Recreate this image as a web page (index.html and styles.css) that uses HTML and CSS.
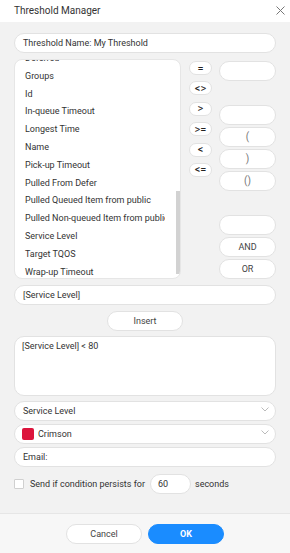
FILE: index.html
```html
<!DOCTYPE html>
<html>
<head>
<meta charset="utf-8">
<link rel="stylesheet" href="styles.css">
</head>
<body>
<div class="dialog">
  <div class="header">
    <span class="title">Threshold Manager</span>
    <svg class="close" width="9" height="9" viewBox="0 0 9 9"><path d="M0.5 0.5L8.5 8.5M8.5 0.5L0.5 8.5" stroke="#777" stroke-width="1" fill="none"/></svg>
  </div>
  <div class="content">
    <div class="pill field">Threshold Name: My Threshold</div>
    <div class="builder">
      <div class="list">
        <div class="list-inner">
          <div class="item">Deferred</div>
          <div class="item">Groups</div>
          <div class="item">Id</div>
          <div class="item">In-queue Timeout</div>
          <div class="item">Longest Time</div>
          <div class="item">Name</div>
          <div class="item">Pick-up Timeout</div>
          <div class="item">Pulled From Defer</div>
          <div class="item">Pulled Queued Item from public</div>
          <div class="item">Pulled Non-queued Item from public</div>
          <div class="item">Service Level</div>
          <div class="item">Target TQOS</div>
          <div class="item">Wrap-up Timeout</div>
        </div>
        <div class="thumb"></div>
      </div>
      <div class="ops">
        <div class="op">=</div>
        <div class="op">&lt;&gt;</div>
        <div class="op">&gt;</div>
        <div class="op">&gt;=</div>
        <div class="op">&lt;</div>
        <div class="op">&lt;=</div>
      </div>
      <div class="tokens">
        <div class="tok"></div>
        <div class="tok spacer"></div>
        <div class="tok"></div>
        <div class="tok paren">(</div>
        <div class="tok paren">)</div>
        <div class="tok paren">()</div>
        <div class="tok spacer"></div>
        <div class="tok"></div>
        <div class="tok">AND</div>
        <div class="tok">OR</div>
      </div>
    </div>
    <div class="pill field sel">[Service Level]</div>
    <div class="insert-row"><div class="pill btn">Insert</div></div>
    <div class="expr">[Service Level] &lt; 80</div>
    <div class="pill field select">
      <span>Service Level</span>
      <svg class="chev" width="8" height="5" viewBox="0 0 8 5"><path d="M0.5 0.5L4 4L7.5 0.5" stroke="#bbb" stroke-width="1" fill="none"/></svg>
    </div>
    <div class="pill field select color">
      <span class="swatch"></span><span>Crimson</span>
      <svg class="chev" width="8" height="5" viewBox="0 0 8 5"><path d="M0.5 0.5L4 4L7.5 0.5" stroke="#bbb" stroke-width="1" fill="none"/></svg>
    </div>
    <div class="pill field email">Email:</div>
    <div class="persist">
      <span class="checkbox"></span>
      <span class="plabel">Send if condition persists for</span>
      <div class="pill secs">60</div>
      <span class="plabel">seconds</span>
    </div>
  </div>
  <div class="footer">
    <div class="pill fbtn">Cancel</div>
    <div class="pill fbtn ok">OK</div>
  </div>
</div>
</body>
</html>
```
FILE: styles.css
```css
* { box-sizing: border-box; }
html, body { margin: 0; padding: 0; }
body {
  font-family: Roboto, "Liberation Sans", sans-serif;
  color: #333;
  background: #fff;
}
.dialog {
  width: 290px;
  height: 553px;
  display: flex;
  flex-direction: column;
}
.header {
  height: 22px;
  background: #fff;
  display: flex;
  align-items: center;
  justify-content: space-between;
  padding: 0 5px 2px 14px;
}
.title { font-size: 10px; color: #333; }
.close { margin-top: 1px; }
.content {
  flex: 1;
  background: #f2f2f2;
  padding: 11px 14px 0 14px;
  display: flex;
  flex-direction: column;
}
.pill {
  background: #fff;
  border: 1px solid #e2e2e2;
  border-radius: 10px;
  font-size: 9px;
  color: #333;
}
.field {
  height: 20px;
  display: flex;
  align-items: center;
  padding: 0 8px;
  flex-shrink: 0;
}
.builder {
  margin-top: 6px;
  height: 221px;
  display: flex;
  flex-shrink: 0;
}
.list {
  position: relative;
  width: 167px;
  height: 220px;
  background: #fff;
  border: 1px solid #e6e6e6;
  border-radius: 8px;
  overflow: hidden;
  padding-right: 15px;
}
.list-inner { margin-top: -10px; }
.item {
  height: 17.8px;
  line-height: 17.8px;
  font-size: 9px;
  color: #333;
  padding-left: 10px;
  white-space: nowrap;
  overflow: hidden;
}
.thumb {
  position: absolute;
  right: 0;
  top: 131px;
  width: 4px;
  height: 83px;
  background: #d2d2d2;
}
.ops {
  margin-left: 8px;
  padding-top: 2px;
  display: flex;
  flex-direction: column;
  gap: 6.4px;
}
.op {
  width: 23px;
  height: 14px;
  background: #fff;
  border: 1px solid #e2e2e2;
  border-radius: 7px;
  font-size: 11px;
  color: #222;
  display: flex;
  align-items: center;
  justify-content: center;
}
.tokens {
  margin-left: 7px;
  padding-top: 2px;
  display: flex;
  flex-direction: column;
  gap: 2.5px;
}
.tok {
  width: 57px;
  height: 19.5px;
  background: #fff;
  border: 1px solid #e2e2e2;
  border-radius: 10px;
  font-size: 9px;
  color: #444;
  display: flex;
  align-items: center;
  justify-content: center;
}
.tok.paren { color: #777; font-size: 10px; }
.tok.spacer { visibility: hidden; }
.sel { margin-top: 5px; }
.insert-row {
  margin-top: 6px;
  display: flex;
  justify-content: center;
}
.btn {
  width: 76px;
  height: 20px;
  display: flex;
  align-items: center;
  justify-content: center;
  color: #444;
}
.expr {
  margin-top: 5px;
  height: 60px;
  background: #fff;
  border: 1px solid #e2e2e2;
  border-radius: 10px;
  font-size: 9px;
  color: #333;
  padding: 4px 7px;
  flex-shrink: 0;
}
.select { margin-top: 5px; justify-content: space-between; padding-right: 6px; }
.select.color { margin-top: 3px; justify-content: flex-start; padding-left: 7px; }
.color .chev { margin-left: auto; }
.chev { margin-top: -3px; }
.swatch {
  width: 12px;
  height: 12px;
  border-radius: 2px;
  background: #dc143c;
  margin-right: 4px;
}
.email { margin-top: 3px; }
.persist {
  margin-top: 7px;
  height: 20px;
  display: flex;
  align-items: center;
}
.checkbox {
  width: 10px;
  height: 10px;
  background: #fff;
  border: 1px solid #d0d0d0;
  border-radius: 1px;
  margin-right: 6px;
}
.plabel { font-size: 9px; color: #333; }
.secs {
  width: 41px;
  height: 20px;
  margin: 0 4px 0 5px;
  display: flex;
  align-items: center;
  padding-left: 7px;
}
.footer {
  height: 40px;
  background: #f7f7f7;
  border-top: 1px solid #e6e6e6;
  display: flex;
  align-items: center;
  justify-content: center;
  gap: 6px;
}
.fbtn {
  width: 76px;
  height: 20px;
  display: flex;
  align-items: center;
  justify-content: center;
  font-size: 9px;
  color: #444;
}
.ok {
  background: #1a8cff;
  border-color: #1a8cff;
  color: #fff;
  font-weight: 700;
}
```
